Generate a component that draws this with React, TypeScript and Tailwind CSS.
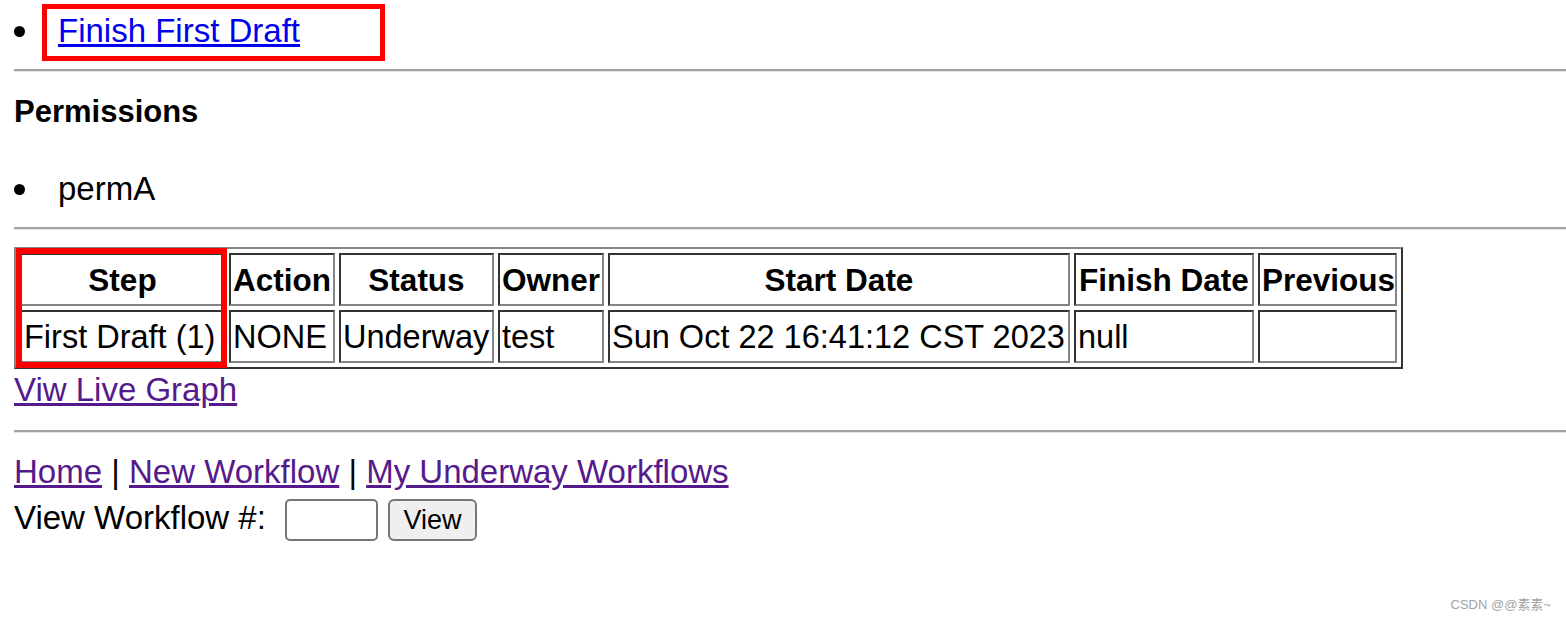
import React from "react";

const cellBase =
  "h-[53px] px-[2px] py-0 border-2 border-solid border-t-[#333333] border-l-[#333333] border-r-[#858585] border-b-[#858585] align-middle whitespace-nowrap overflow-visible";

const cols = [
  { h: "Step", d: "First Draft (1)", w: "w-[205px]" },
  { h: "Action", d: "NONE", w: "w-[106px]" },
  { h: "Status", d: "Underway", w: "w-[155px]" },
  { h: "Owner", d: "test", w: "w-[106px]" },
  { h: "Start Date", d: "Sun Oct 22 16:41:12 CST 2023", w: "w-[462px]" },
  { h: "Finish Date", d: "null", w: "w-[180px]" },
  { h: "Previous", d: "", w: "w-[139px]" },
];

function Hr({ mt }: { mt: string }) {
  return (
    <div
      className={`${mt} h-[3px] border-t-2 border-solid border-t-[#a3a3a3] border-b border-b-[#e4e4e4]`}
    />
  );
}

export default function App() {
  return (
    <div className="relative w-[1566px] h-[622px] overflow-hidden bg-white pl-[14px] font-['Liberation_Sans',Arial,sans-serif] text-[33px] leading-[38px] text-black">
      {/* li: Finish First Draft */}
      <div className="flex items-start pt-[12px]">
        <span className="mt-[14px] w-[11px] h-[11px] rounded-full bg-black shrink-0" />
        <a href="#" className="ml-[33px] text-[#0000ee] underline">
          Finish First Draft
        </a>
      </div>

      <Hr mt="mt-[19px]" />

      <div className="mt-[22px] text-[31px] leading-[36px] font-bold">Permissions</div>

      <div className="mt-[40px] flex items-start">
        <span className="mt-[14px] w-[11px] h-[11px] rounded-full bg-black shrink-0" />
        <span className="ml-[33px]">permA</span>
      </div>

      <Hr mt="mt-[19px]" />

      <table className="mt-[17px] w-[1389px] table-fixed border-separate border-spacing-[4px] border-2 border-solid border-t-[#858585] border-l-[#858585] border-r-[#333333] border-b-[#333333]">
        <thead>
          <tr>
            {cols.map((c) => (
              <th key={c.h} className={`${cellBase} ${c.w} text-[31.5px] font-bold text-center`}>
                {c.h}
              </th>
            ))}
          </tr>
        </thead>
        <tbody>
          <tr>
            {cols.map((c) => (
              <td key={c.h} className={`${cellBase} ${c.w} text-[32.5px] text-left font-normal`}>
                {c.d}
              </td>
            ))}
          </tr>
        </tbody>
      </table>

      <div className="mt-[2px]">
        <a href="#" className="text-[#551a8b] underline">
          Viw Live Graph
        </a>
      </div>

      <Hr mt="mt-[21px]" />

      <div className="mt-[20px] whitespace-pre">
        <a href="#" className="text-[#551a8b] underline">
          Home
        </a>
        {" | "}
        <a href="#" className="text-[#551a8b] underline">
          New Workflow
        </a>
        {" | "}
        <a href="#" className="text-[#551a8b] underline">
          My Underway Workflows
        </a>
      </div>

      <div className="mt-[8px] flex items-start">
        <span className="w-[271px] shrink-0 whitespace-nowrap">View Workflow #:</span>
        <input
          type="text"
          className="w-[93px] h-[42px] border-2 border-solid border-[#767676] rounded-[5px] bg-white outline-none"
        />
        <button className="ml-[10px] w-[89px] h-[42px] bg-[#efefef] border-2 border-solid border-[#767676] rounded-[6px] text-[27px] leading-none text-black flex items-center justify-center">
          View
        </button>
      </div>

      {/* annotation overlays */}
      <div className="absolute left-[42px] top-[4px] w-[343px] h-[57px] border-[5px] border-solid border-[#ff0000] pointer-events-none" />
      <div className="absolute left-[16px] top-[248px] w-[211px] h-[120px] border-[6px] border-solid border-[#ff0000] pointer-events-none" />

      <div className="absolute right-[15px] top-[597px] text-[13px] leading-[15px] text-[#a3a3a3] font-['Liberation_Sans','Noto_Sans_CJK_SC',sans-serif]">
        CSDN @@素素~
      </div>
    </div>
  );
}
